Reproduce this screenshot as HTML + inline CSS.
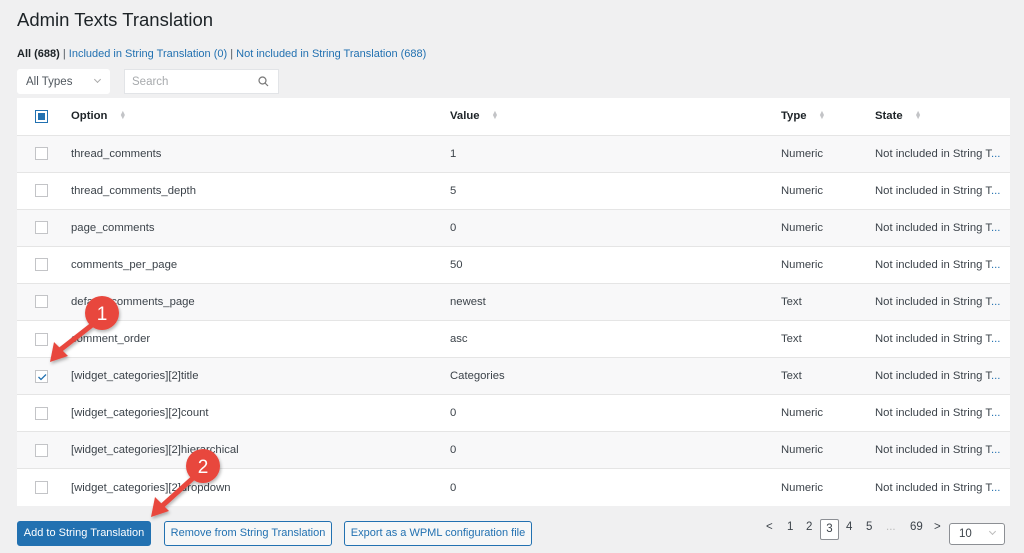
<!DOCTYPE html>
<html><head><style>
*{box-sizing:border-box;margin:0;padding:0}
body{width:1024px;height:553px;background:#f0f0f1;font-family:"Liberation Sans",sans-serif;color:#3c434a;position:relative;overflow:hidden;font-size:11px}
h1{position:absolute;left:17px;top:9px;font-size:18.5px;font-weight:400;color:#1d2327}
.subs{position:absolute;left:17px;top:48px;font-size:11px;color:#50575e}
.subs b{color:#1d2327}
.subs a{color:#2271b1;text-decoration:none}
.sel{position:absolute;left:17px;top:69px;width:93px;height:25px;background:#fff;border-radius:3px;padding:7px 9px;font-size:11.5px;color:#50575e}
.sel i{position:absolute;right:10px;top:8px;width:5px;height:5px;border-right:1px solid #aaa;border-bottom:1px solid #aaa;transform:rotate(45deg)}
.srch{position:absolute;left:124px;top:69px;width:155px;height:25px;background:#fff;border:1px solid #e2e4e7;padding:6px 7px;color:#a7aaad;font-size:11.5px}
table{position:absolute;left:17px;top:98px;width:993px;border-collapse:collapse;background:#fff}
td,th{height:37.1px;border-top:1px solid #e5e5e5;text-align:left;font-weight:400;padding:0;font-size:11.3px}
th{font-weight:700;color:#1d2327;height:37px;border-top:none}
tr:nth-child(even) td{background:#f8f8f9}
.cb{width:13px;height:13px;border:1px solid #c3c4c7;background:#fff;display:inline-block;margin-left:18px;vertical-align:middle;position:relative}
.s{color:#c3c4c7;font-size:7px;margin-left:12px;font-weight:400;display:inline-block;line-height:4px;vertical-align:middle}
.d{color:#2271b1}
.btn{position:absolute;top:521px;height:25px;border:1px solid #2271b1;border-radius:3px;color:#2271b1;font-size:11px;text-align:center;line-height:23px;background:#f6f7f7}
.pg{position:absolute;top:521px;font-size:11.5px;color:#3c434a}
</style></head><body>
<h1>Admin Texts Translation</h1>
<div class="subs"><b>All (688)</b> | <a>Included in String Translation (0)</a> | <a>Not included in String Translation (688)</a></div>
<div class="sel">All Types<i></i></div>
<div class="srch">Search<svg style="position:absolute;right:9px;top:6px" width="11" height="11" viewBox="0 0 11 11"><circle cx="4.5" cy="4.5" r="3.5" fill="none" stroke="#777" stroke-width="1.2"/><path d="M7 7l3 3" stroke="#777" stroke-width="1.2"/></svg></div>
<table>
<tr><th style="width:54px"><span class="cb" style="border-color:#2271b1"><span style="position:absolute;left:2px;top:2px;width:7px;height:7px;background:#2271b1"></span></span></th><th style="width:379px">Option<span class="s">▲<br>▼</span></th><th style="width:331px">Value<span class="s">▲<br>▼</span></th><th style="width:94px">Type<span class="s">▲<br>▼</span></th><th>State<span class="s">▲<br>▼</span></th></tr>
<tr><td><span class="cb"></span></td><td>thread_comments</td><td>1</td><td>Numeric</td><td>Not included in String T<span class="d">...</span></td></tr>
<tr><td><span class="cb"></span></td><td>thread_comments_depth</td><td>5</td><td>Numeric</td><td>Not included in String T<span class="d">...</span></td></tr>
<tr><td><span class="cb"></span></td><td>page_comments</td><td>0</td><td>Numeric</td><td>Not included in String T<span class="d">...</span></td></tr>
<tr><td><span class="cb"></span></td><td>comments_per_page</td><td>50</td><td>Numeric</td><td>Not included in String T<span class="d">...</span></td></tr>
<tr><td><span class="cb"></span></td><td>default_comments_page</td><td>newest</td><td>Text</td><td>Not included in String T<span class="d">...</span></td></tr>
<tr><td><span class="cb"></span></td><td>comment_order</td><td>asc</td><td>Text</td><td>Not included in String T<span class="d">...</span></td></tr>
<tr><td><span class="cb"><svg style="position:absolute;left:1px;top:1px" width="10" height="10" viewBox="0 0 10 10"><path d="M1.5 5l2.5 2.5 5-5" fill="none" stroke="#2271b1" stroke-width="1.3"/></svg></span></td><td>[widget_categories][2]title</td><td>Categories</td><td>Text</td><td>Not included in String T<span class="d">...</span></td></tr>
<tr><td><span class="cb"></span></td><td>[widget_categories][2]count</td><td>0</td><td>Numeric</td><td>Not included in String T<span class="d">...</span></td></tr>
<tr><td><span class="cb"></span></td><td>[widget_categories][2]hierarchical</td><td>0</td><td>Numeric</td><td>Not included in String T<span class="d">...</span></td></tr>
<tr><td><span class="cb"></span></td><td>[widget_categories][2]dropdown</td><td>0</td><td>Numeric</td><td>Not included in String T<span class="d">...</span></td></tr>
</table>
<div class="btn" style="left:17px;width:134px;background:#2271b1;color:#fff">Add to String Translation</div>
<div class="btn" style="left:164px;width:168px">Remove from String Translation</div>
<div class="btn" style="left:344px;width:188px">Export as a WPML configuration file</div>
<div class="pg" style="left:766px;top:521px">&lt;</div>
<div class="pg" style="left:787px;top:521px">1</div>
<div class="pg" style="left:806px;top:521px">2</div>
<div class="pg" style="left:820px;top:519px;width:19px;height:21px;border:1px solid #8c8f94;background:#fff;text-align:center;line-height:19px;border-radius:2px">3</div>
<div class="pg" style="left:846px;top:521px">4</div>
<div class="pg" style="left:866px;top:521px">5</div>
<div class="pg" style="left:886px;top:521px;color:#bbb">...</div>
<div class="pg" style="left:910px;top:521px">69</div>
<div class="pg" style="left:934px;top:521px">&gt;</div>
<div class="pg" style="left:949px;top:523px;width:56px;height:22px;border:1px solid #8c8f94;background:#fff;border-radius:3px;padding:4px 9px">10<span style="position:absolute;right:9px;top:5px;width:5px;height:5px;border-right:1px solid #bbb;border-bottom:1px solid #bbb;transform:rotate(45deg)"></span></div>
<svg style="position:absolute;left:0;top:0" width="1024" height="553">
<defs><filter id="sh"><feDropShadow dx="1" dy="2" stdDeviation="1.5" flood-opacity="0.3"/></filter></defs>
<g filter="url(#sh)">
<path d="M92 325 L60 350" stroke="#e8473d" stroke-width="5" stroke-linecap="round"/>
<path d="M50 362 L54 342 L68 356 Z" fill="#e8473d"/>
<circle cx="102" cy="313" r="17" fill="#e8473d"/>
<path d="M192 479 L162 506" stroke="#e8473d" stroke-width="5" stroke-linecap="round"/>
<path d="M151 517 L155 497 L169 511 Z" fill="#e8473d"/>
<circle cx="203" cy="466" r="17" fill="#e8473d"/>
</g>
<text x="102" y="320" fill="#fff" font-family="Liberation Sans" font-size="19" text-anchor="middle">1</text>
<text x="203" y="473" fill="#fff" font-family="Liberation Sans" font-size="19" text-anchor="middle">2</text>
</svg>
</body></html>
